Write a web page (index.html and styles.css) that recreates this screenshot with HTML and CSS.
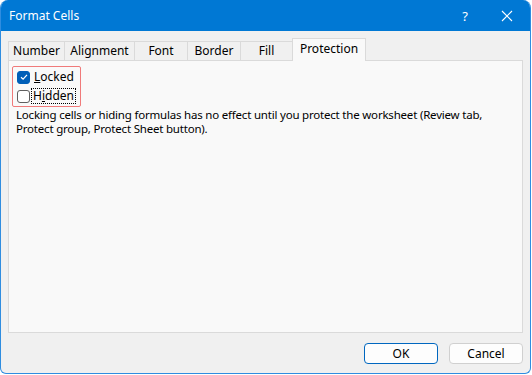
FILE: index.html
```html
<!DOCTYPE html>
<html lang="en">
<head>
    <meta charset="UTF-8">
    <title>Format Cells</title>
    <link rel="stylesheet" href="styles.css">
</head>
<body>
<div class="dialog">
    <div class="title-bar">
        <span class="title">Format Cells</span>
        <span class="help">?</span>
        <span class="close">
            <svg width="12" height="12" viewBox="0 0 12 12"><path d="M1 1L11 11M11 1L1 11" stroke="#fff" stroke-width="1.1" fill="none"/></svg>
        </span>
    </div>
    <div class="body">
        <ul class="tabs">
            <li class="tab">Number</li>
            <li class="tab">Alignment</li>
            <li class="tab">Font</li>
            <li class="tab">Border</li>
            <li class="tab">Fill</li>
            <li class="tab active">Protection</li>
        </ul>
        <div class="panel">
            <div class="options">
                <label class="check">
                    <span class="box checked">
                        <svg width="10" height="10" viewBox="0 0 10 10"><path d="M2 5.2L4.1 7.2L8 2.8" stroke="#fff" stroke-width="1.2" fill="none"/></svg>
                    </span>
                    <span class="label"><u>L</u>ocked</span>
                </label>
                <label class="check">
                    <span class="box"></span>
                    <span class="label focus">H<u>i</u>dden</span>
                </label>
            </div>
            <p class="note">Locking cells or hiding formulas has no effect until you protect the worksheet (Review tab, Protect group, Protect Sheet button).</p>
        </div>
        <div class="buttons">
            <button class="btn default">OK</button>
            <button class="btn">Cancel</button>
        </div>
    </div>
</div>
</body>
</html>
```

FILE: styles.css
```css
*{
    margin: 0;
    padding: 0;
    box-sizing: border-box;
}
li{
    list-style: none;
}
body{
    background: #fff;
    font-family: "Noto Sans", "Open Sans", sans-serif;
    font-size: 12px;
    color: #000;
}
.dialog{
    width: 531px;
    height: 374px;
    border: 1px solid #2f8de0;
    border-top: none;
    border-radius: 8px 8px 6px 6px;
    background: #f0f0f0;
    overflow: hidden;
    display: flex;
    flex-direction: column;
}
.title-bar{
    height: 31px;
    background: #0078d4;
    color: #fff;
    display: flex;
    align-items: center;
    padding-left: 8px;
}
.title{
    flex: 1;
    font-size: 12px;
}
.help{
    width: 38px;
    margin-right: 4px;
    text-align: center;
    font-size: 13px;
}
.close{
    width: 38px;
    height: 31px;
    display: flex;
    align-items: center;
    justify-content: center;
    margin-right: 4px;
}
.body{
    flex: 1;
    padding: 7px 7px 0 7px;
    display: flex;
    flex-direction: column;
}
.tabs{
    display: flex;
    align-items: flex-end;
    height: 22px;
    position: relative;
    z-index: 1;
}
.tab{
    height: 19px;
    border: 1px solid #dadada;
    border-bottom: none;
    border-right: none;
    background: #f0f0f0;
    text-align: center;
    line-height: 18px;
    color: #000;
}
.tab:nth-child(1){ width: 56px; }
.tab:nth-child(2){ width: 70px; }
.tab:nth-child(3){ width: 53px; }
.tab:nth-child(4){ width: 53px; }
.tab:nth-child(5){ width: 52px; }
.tab.active{
    width: 74px;
    height: 23px;
    background: #f9f9f9;
    border-right: 1px solid #dadada;
    line-height: 20px;
    margin-bottom: -1px;
}
.panel{
    height: 273px;
    background: #f9f9f9;
    border: 1px solid #dadada;
    padding: 5px 7px;
}
.options{
    width: 69px;
    height: 41px;
    border: 1px solid #f07a7a;
    border-radius: 2px;
    margin-left: -4px;
    padding: 2px 0 0 4px;
    display: flex;
    flex-direction: column;
    gap: 3px;
}
.check{
    display: flex;
    align-items: center;
    height: 16px;
}
.box{
    width: 13px;
    height: 13px;
    border: 1px solid #5f5f5f;
    border-radius: 3px;
    background: #fff;
    display: flex;
    align-items: center;
    justify-content: center;
}
.box.checked{
    background: #005fb8;
    border-color: #005fb8;
}
.label{
    margin-left: 3px;
    padding: 0 1px;
    line-height: 14px;
}
.label.focus{
    margin-left: 2px;
    padding: 0 1px;
    outline: 1px dotted #000;
}
.note{
    font-size: 11.5px;
    line-height: 14px;
    margin-top: 1px;
    letter-spacing: -0.2px;
}
.buttons{
    display: flex;
    justify-content: flex-end;
    gap: 11px;
    padding: 10px 0 0 0;
}
.btn{
    width: 74px;
    height: 21px;
    border: 1px solid #d0d0d0;
    border-radius: 4px;
    background: #fdfdfd;
    font-family: "Noto Sans", "Open Sans", sans-serif;
    font-size: 12px;
    color: #000;
}
.btn.default{
    border-color: #0067c0;
}
```
